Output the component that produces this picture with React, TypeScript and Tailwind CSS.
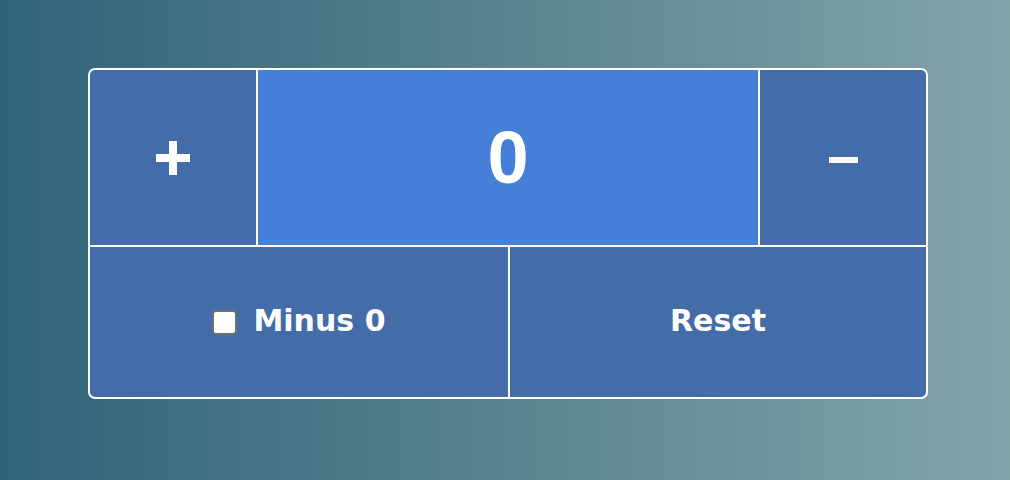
import { useState } from "react";

export default function App() {
  const [count, setCount] = useState(0);
  const [minusZero, setMinusZero] = useState(false);

  const cellCls =
    "flex items-center justify-center bg-[#436ca8] text-white select-none";

  return (
    <div className="h-[480px] w-full bg-gradient-to-r from-[#2f6377] to-[#84a4aa] pt-[68px] pl-[88px] [font-family:'DejaVu_Sans',sans-serif]">
      <div className="w-[840px] rounded-[7px] border-2 border-white bg-white overflow-hidden flex flex-col gap-[2px]">
        <div className="grid grid-cols-[166px_1fr_166px] h-[175px] gap-[2px]">
          <button className={cellCls} onClick={() => setCount((c) => c + 1)} aria-label="plus">
            {/* plus sign drawn with two bars */}
            <span className="relative w-[34px] h-[34px]">
              <span className="absolute left-0 top-[13px] w-[34px] h-[8px] bg-white" />
              <span className="absolute left-[13px] top-0 w-[8px] h-[34px] bg-white" />
            </span>
          </button>
          <div className="flex items-center justify-center bg-[#467fd7] text-white text-[74px] font-bold leading-none [font-family:'Liberation_Sans',Arial,sans-serif]">
            {count}
          </div>
          <button className={cellCls} onClick={() => setCount((c) => c - 1)} aria-label="minus">
            <span className="mt-[5px] w-[29px] h-[6px] bg-white" />
          </button>
        </div>
        <div className="grid grid-cols-[418px_1fr] h-[150px] gap-[2px]">
          <label className={`${cellCls} gap-[16px] text-[30px] font-bold cursor-pointer`}>
            <span
              className={`w-[25px] h-[25px] rounded-[4px] border-2 border-[#707070] ${minusZero ? "bg-[#0a6cff]" : "bg-white"}`}
              onClick={() => setMinusZero((v) => !v)}
            />
            <span className="-mt-[3px]">Minus 0</span>
          </label>
          <button className={`${cellCls} text-[30px] font-bold`} onClick={() => setCount(0)}>
            <span className="-mt-[3px]">Reset</span>
          </button>
        </div>
      </div>
    </div>
  );
}
